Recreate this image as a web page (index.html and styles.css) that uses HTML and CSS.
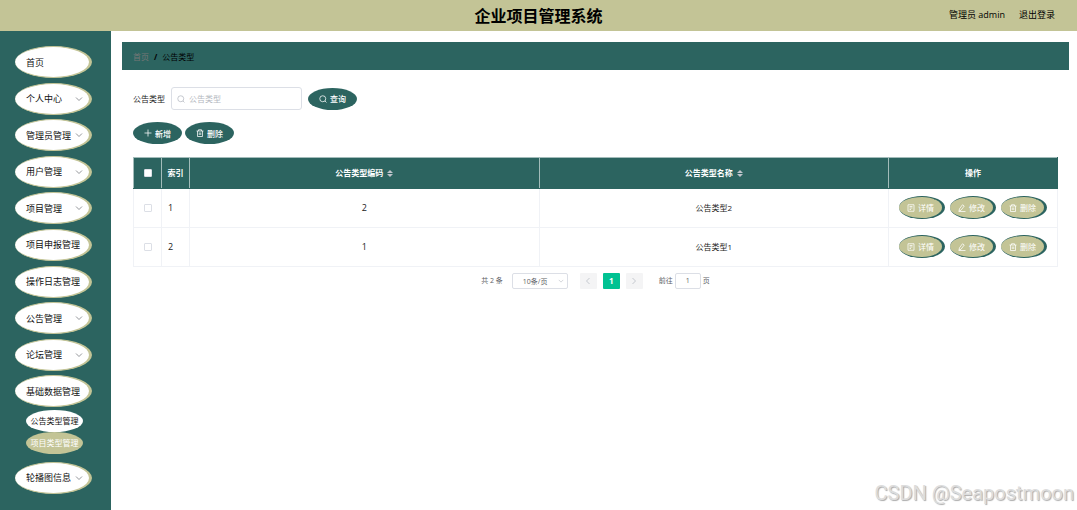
FILE: index.html
```html
<!DOCTYPE html>
<html lang="zh-CN">

<head>
    <meta charset="UTF-8">
    <meta name="viewport" content="width=device-width, initial-scale=1.0">
    <title>企业项目管理系统</title>
    <link rel="stylesheet" href="styles.css">
</head>

<body>
    <svg class="sprite" aria-hidden="true">
        <symbol id="i-down" viewBox="0 0 16 16"><path d="M2 5l6 6 6-6" /></symbol>
        <symbol id="i-left" viewBox="0 0 16 16"><path d="M11 2L5 8l6 6" /></symbol>
        <symbol id="i-right" viewBox="0 0 16 16"><path d="M5 2l6 6-6 6" /></symbol>
        <symbol id="i-search" viewBox="0 0 16 16"><circle cx="7.5" cy="7.5" r="6" /><path d="M12 12l3 3" /></symbol>
        <symbol id="i-plus" viewBox="0 0 16 16"><path d="M8 1v14M1 8h14" /></symbol>
        <symbol id="i-trash" viewBox="0 0 16 16"><path d="M1 4h14M5 4V1.5h6V4M3 4v11h10V4M6.5 7v5M9.5 7v5" /></symbol>
        <symbol id="i-doc" viewBox="0 0 16 16"><path d="M2 1.5h12v13H2zM5 5h6M5 8h6M5 11h3" /></symbol>
        <symbol id="i-edit" viewBox="0 0 16 16"><path d="M9 1.5l3.5 2.500-6.500 8.500-4 1.500 1-4.500zM1 15h14" /></symbol>
    </svg>

    <header>
        <h1>企业项目管理系统</h1>
        <div class="user">
            <span>管理员 admin</span>
            <a href="#">退出登录</a>
        </div>
    </header>

    <div class="layout">
        <nav>
            <ul class="menu">
                <li><a href="#">首页</a></li>
                <li><a href="#">个人中心<svg class="icon"><use href="#i-down" /></svg></a></li>
                <li><a href="#">管理员管理<svg class="icon"><use href="#i-down" /></svg></a></li>
                <li><a href="#">用户管理<svg class="icon"><use href="#i-down" /></svg></a></li>
                <li><a href="#">项目管理<svg class="icon"><use href="#i-down" /></svg></a></li>
                <li><a href="#">项目申报管理</a></li>
                <li><a href="#">操作日志管理</a></li>
                <li><a href="#">公告管理<svg class="icon"><use href="#i-down" /></svg></a></li>
                <li><a href="#">论坛管理<svg class="icon"><use href="#i-down" /></svg></a></li>
                <li>
                    <a href="#">基础数据管理</a>
                    <ul class="submenu">
                        <li><a href="#">公告类型管理</a></li>
                        <li><a href="#" class="hover">项目类型管理</a></li>
                    </ul>
                </li>
                <li><a href="#">轮播图信息<svg class="icon"><use href="#i-down" /></svg></a></li>
            </ul>
        </nav>

        <main>
            <div class="breadcrumb">
                <a href="#">首页</a>
                <b>/</b>
                <span>公告类型</span>
            </div>

            <div class="content">
                <form class="search">
                    <label for="type">公告类型</label>
                    <div class="search-box">
                        <svg class="icon"><use href="#i-search" /></svg>
                        <input type="text" id="type" placeholder="公告类型">
                    </div>
                    <button type="button" class="btn"><svg class="icon"><use href="#i-search" /></svg>查询</button>
                </form>

                <div class="actions">
                    <button type="button" class="btn"><svg class="icon"><use href="#i-plus" /></svg>新增</button>
                    <button type="button" class="btn"><svg class="icon"><use href="#i-trash" /></svg>删除</button>
                </div>

                <table>
                    <thead>
                        <tr>
                            <th class="col-check"><input type="checkbox" aria-label="全选"></th>
                            <th class="col-index">索引</th>
                            <th>公告类型编码<span class="sort"></span></th>
                            <th>公告类型名称<span class="sort"></span></th>
                            <th class="col-action">操作</th>
                        </tr>
                    </thead>
                    <tbody>
                        <tr>
                            <td><input type="checkbox" aria-label="选择第1行"></td>
                            <td class="index">1</td>
                            <td class="code">2</td>
                            <td>公告类型2</td>
                            <td>
                                <div class="row-btns">
                                    <button type="button"><svg class="icon"><use href="#i-doc" /></svg>详情</button>
                                    <button type="button"><svg class="icon"><use href="#i-edit" /></svg>修改</button>
                                    <button type="button"><svg class="icon"><use href="#i-trash" /></svg>删除</button>
                                </div>
                            </td>
                        </tr>
                        <tr>
                            <td><input type="checkbox" aria-label="选择第2行"></td>
                            <td class="index">2</td>
                            <td class="code">1</td>
                            <td>公告类型1</td>
                            <td>
                                <div class="row-btns">
                                    <button type="button"><svg class="icon"><use href="#i-doc" /></svg>详情</button>
                                    <button type="button"><svg class="icon"><use href="#i-edit" /></svg>修改</button>
                                    <button type="button"><svg class="icon"><use href="#i-trash" /></svg>删除</button>
                                </div>
                            </td>
                        </tr>
                    </tbody>
                </table>

                <div class="pagination">
                    <span>共 2 条</span>
                    <div class="page-size">
                        <select aria-label="每页条数">
                            <option>10条/页</option>
                            <option>20条/页</option>
                        </select>
                        <svg class="icon"><use href="#i-down" /></svg>
                    </div>
                    <div class="pager">
                        <button type="button" aria-label="上一页"><svg class="icon"><use href="#i-left" /></svg></button>
                        <button type="button" class="active">1</button>
                        <button type="button" aria-label="下一页"><svg class="icon"><use href="#i-right" /></svg></button>
                    </div>
                    <div class="jump">
                        <label for="page">前往</label>
                        <input type="text" id="page" value="1">
                        <span>页</span>
                    </div>
                </div>
            </div>
        </main>
    </div>

    <div class="watermark">CSDN @Seapostmoon</div>
</body>

</html>
```
FILE: styles.css
```css
:root {
    --green: #2c6460;
    --khaki: #c3c496;
    --line: #f0f2f6;
}

* {
    box-sizing: border-box;
}

body {
    margin: 0;
    min-height: 100vh;
    display: flex;
    flex-direction: column;
    font-family: "Open Sans", "Noto Sans CJK SC", sans-serif;
    font-size: 8px;
    color: #222;
    background-color: white;
}

a {
    color: inherit;
    text-decoration: none;
}

ul {
    list-style: none;
    margin: 0;
    padding: 0;
}

button,
input,
select {
    font: inherit;
    margin: 0;
}

.sprite {
    display: none;
}

.icon {
    width: 8px;
    height: 8px;
    flex: none;
    fill: none;
    stroke: currentColor;
    stroke-width: 1.5;
}

header {
    height: 31px;
    display: grid;
    grid-template-columns: 1fr auto 1fr;
    align-items: center;
    padding-right: 22px;
    padding-left: 22px;
    background-color: var(--khaki);
    color: black;
}

h1 {
    grid-column: 2;
    margin: 0;
    font-size: 16px;
    line-height: 28px;
}

.user {
    display: flex;
    justify-content: flex-end;
    gap: 14px;
    padding-bottom: 2px;
    font-size: 9px;
    line-height: 28px;
}

.layout {
    flex: 1;
    display: flex;
}

nav {
    width: 111px;
    flex: none;
    display: flex;
    padding: 15px 19px 16px 15px;
    background-color: var(--green);
}

.menu {
    flex: 1;
    display: flex;
    flex-direction: column;
    justify-content: space-between;
}

.menu > li > a {
    position: relative;
    display: flex;
    align-items: center;
    height: 32px;
    padding-left: 11px;
    border: 1px solid var(--khaki);
    border-left-width: 0;
    border-right-width: 3px;
    border-radius: 50%;
    background-color: white;
    color: #111;
    font-size: 9px;
    white-space: nowrap;
}

.menu .icon {
    position: absolute;
    right: 6px;
    color: #707378;
}

.submenu {
    padding: 3px 9px 3px 11px;
}

.submenu a {
    display: block;
    height: 22px;
    line-height: 22px;
    border-radius: 50%;
    background-color: white;
    color: #111;
    text-align: center;
    white-space: nowrap;
}

.submenu a.hover {
    background-color: var(--khaki);
    color: white;
}

main {
    flex: 1;
    min-width: 0;
    padding: 11px 8px 11px 11px;
}

.breadcrumb {
    display: flex;
    align-items: center;
    gap: 5px;
    height: 28px;
    padding-left: 11px;
    background-color: var(--green);
    color: black;
}

.breadcrumb a {
    color: #777;
}

.content {
    padding: 17px 11px 0;
}

.search {
    display: flex;
    align-items: center;
    gap: 6px;
}

.search-box {
    position: relative;
}

.search-box input {
    display: block;
    width: 131px;
    height: 23px;
    padding: 0 17px;
    border: 1px solid #dcdfe6;
    border-radius: 3px;
}

.search-box input::placeholder {
    color: #b4b8c0;
}

.search-box .icon {
    position: absolute;
    left: 6px;
    top: 8px;
    color: #b4b8c0;
}

.btn {
    display: flex;
    align-items: center;
    justify-content: center;
    gap: 3px;
    width: 49px;
    height: 22px;
    padding: 0;
    border: 0;
    border-radius: 50%;
    background-color: var(--green);
    color: white;
    font-weight: 500;
}

.actions {
    display: flex;
    gap: 3px;
    margin: 12px 0 13px;
}

table {
    width: 100%;
    table-layout: fixed;
    border-collapse: collapse;
}

th,
td {
    padding: 0;
    border: 1px solid var(--line);
    text-align: center;
}

th {
    height: 31px;
    padding-bottom: 2px;
    border-color: #a3bcba;
    border-bottom-color: var(--green);
    background-color: var(--green);
    color: white;
}

th:last-child {
    border-right-color: var(--green);
}

td {
    height: 39px;
    padding-bottom: 1px;
}

.col-check,
.col-index {
    width: 28px;
}

.col-check {
    padding-bottom: 0;
}

.col-action {
    width: 169px;
}

.index,
.code {
    font-size: 9px;
}

td.index {
    padding-left: 6px;
    text-align: left;
}

input[type="checkbox"] {
    appearance: none;
    display: block;
    width: 8px;
    height: 8px;
    margin: 0 auto;
    border: 1px solid #dcdfe6;
    border-radius: 1px;
    background-color: white;
}

.sort {
    display: inline-flex;
    flex-direction: column;
    gap: 1px;
    margin-left: 4px;
    vertical-align: middle;
}

.sort::before,
.sort::after {
    content: "";
    border: 3px solid transparent;
}

.sort::before {
    border-top-width: 0;
    border-bottom-color: #c0c4cc;
}

.sort::after {
    border-bottom-width: 0;
    border-top-color: #c0c4cc;
}

.row-btns {
    display: flex;
    justify-content: center;
    gap: 5px;
}

.row-btns button {
    display: flex;
    align-items: center;
    justify-content: center;
    gap: 3px;
    width: 46px;
    height: 23px;
    padding: 0;
    border: 1px solid var(--green);
    border-left-width: 0;
    border-right-width: 3px;
    border-radius: 50%;
    background-color: var(--khaki);
    color: white;
}

.pagination {
    display: flex;
    justify-content: center;
    align-items: center;
    margin-top: 6px;
    font-size: 7px;
    line-height: 16px;
    color: #606266;
}

.page-size {
    position: relative;
    margin: 0 12px 0 9px;
}

.page-size select {
    appearance: none;
    display: block;
    width: 56px;
    height: 16px;
    padding: 0 10px;
    border: 1px solid #dcdfe6;
    border-radius: 2px;
    background-color: white;
    color: #606266;
}

.page-size .icon {
    position: absolute;
    top: 5px;
    right: 4px;
    width: 6px;
    height: 6px;
    color: #b4b8c0;
}

.pager {
    display: flex;
    gap: 6px;
}

.pager button {
    display: flex;
    align-items: center;
    justify-content: center;
    width: 17px;
    height: 16px;
    padding: 0;
    border: 0;
    border-radius: 1px;
    background-color: #f4f4f5;
    color: #b4b8c0;
}

.pager .active {
    background-color: #00c292;
    color: white;
    font-size: 8px;
    font-weight: bold;
}

.jump {
    display: flex;
    gap: 2px;
    margin-left: 16px;
}

.jump input {
    width: 26px;
    height: 16px;
    padding: 0;
    border: 1px solid #dcdfe6;
    border-radius: 2px;
    color: #606266;
    text-align: center;
}

.watermark {
    position: absolute;
    right: 3px;
    bottom: 5px;
    font-family: Roboto, sans-serif;
    font-size: 20px;
    line-height: 24px;
    color: #ddd;
    text-shadow: 1px 1px 1px #aaa;
}
```
